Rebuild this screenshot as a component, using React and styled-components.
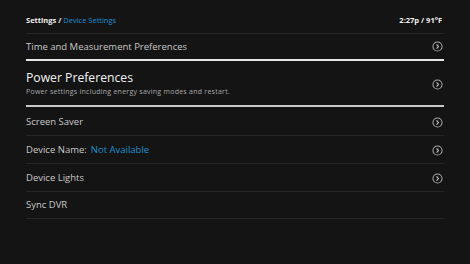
import React from "react";
import styled, { createGlobalStyle } from "styled-components";

const GlobalStyle = createGlobalStyle`
    html, body {
        margin: 0;
        padding: 0;
        background: #141414;
    }
    body {
        font-family: "Open Sans", "Noto Sans", sans-serif;
        -webkit-font-smoothing: antialiased;
    }
`;

const Screen = styled.div`
    width: 470px;
    height: 264px;
    background: #141414;
    padding: 0 26px;
    box-sizing: border-box;
    overflow: hidden;
`;

const Header = styled.div`
    height: 34px;
    display: flex;
    align-items: center;
    justify-content: space-between;
    padding-top: 6px;
    box-sizing: border-box;
    border-bottom: 1px solid #262626;
    font-size: 7.5px;
    font-weight: 700;
    color: #f0f0f0;
`;

const Crumb = styled.span`
    color: ${(p) => (p.$active ? "#1f8fd0" : "#f0f0f0")};
    font-weight: ${(p) => (p.$active ? 400 : 700)};
`;

const Clock = styled.span`
    margin-right: 2px;
`;

const Row = styled.div`
    display: flex;
    align-items: center;
    justify-content: space-between;
    height: ${(p) => p.$h}px;
    box-sizing: border-box;
    padding-top: ${(p) => p.$pt || 0}px;
    border-bottom: ${(p) => (p.$line ? `2px solid ${p.$line}` : "1px solid #262626")};
`;

const Text = styled.div`
    display: flex;
    flex-direction: column;
    gap: 2px;
`;

const Label = styled.span`
    font-size: ${(p) => (p.$big ? "12.2px" : "9.5px")};
    color: ${(p) => (p.$big ? "#f2f2f2" : "#c8c8c8")};
    line-height: 1.2;
`;

const Value = styled.span`
    color: #1f8fd0;
    margin-left: 4px;
`;

const Sub = styled.span`
    font-size: 7px;
    letter-spacing: 0.25px;
    color: #a8a8a8;
    line-height: 1.2;
`;

const Chevron = styled.svg`
    width: 11px;
    height: 11px;
    margin-right: 1px;
    flex: none;
`;

function Arrow() {
    return (
        <Chevron viewBox="0 0 12 12">
            <circle cx="6" cy="6" r="5" fill="none" stroke="#a6a6a6" strokeWidth="1.1" />
            <path d="M5 3.8 L7 6 L5 8.2" fill="none" stroke="#c8c8c8" strokeWidth="1.2" />
        </Chevron>
    );
}

const items = [
    { label: "Time and Measurement Preferences", h: 27, arrow: true, line: "#e6e6e6" },
    { label: "Power Preferences", sub: "Power settings including energy saving modes and restart.", h: 46, pt: 2, arrow: true, big: true, line: "#c8c8c8" },
    { label: "Screen Saver", h: 29, pt: 2, arrow: true },
    { label: "Device Name:", value: "Not Available", h: 28, pt: 1, arrow: true },
    { label: "Device Lights", h: 28, pt: 1, arrow: true },
    { label: "Sync DVR", h: 27 },
];

export default function App() {
    return (
        <>
            <GlobalStyle />
            <Screen>
                <Header>
                    <span>
                        <Crumb>Settings / </Crumb>
                        <Crumb $active>Device Settings</Crumb>
                    </span>
                    <Clock>2:27p / 91°F</Clock>
                </Header>
                {items.map((it) => (
                    <Row key={it.label} $h={it.h} $pt={it.pt} $line={it.line}>
                        <Text>
                            <Label $big={it.big}>
                                {it.label}
                                {it.value && <Value>{it.value}</Value>}
                            </Label>
                            {it.sub && <Sub>{it.sub}</Sub>}
                        </Text>
                        {it.arrow && <Arrow />}
                    </Row>
                ))}
            </Screen>
        </>
    );
}
